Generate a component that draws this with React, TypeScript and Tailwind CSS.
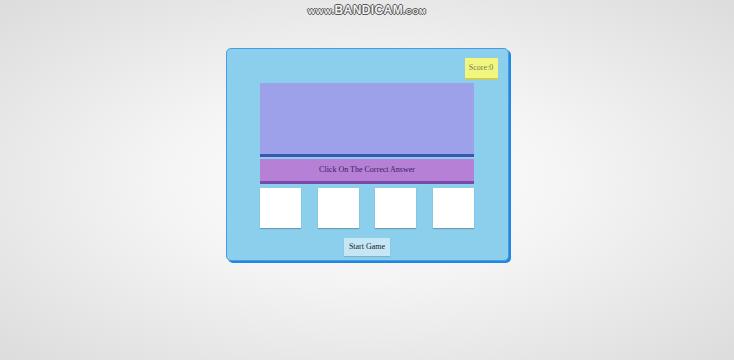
export default function App() {
  return (
    <div className="relative h-[360px] w-[734px] overflow-hidden bg-[radial-gradient(ellipse_at_center,#ffffff_0%,#f4f4f4_40%,#dcdcdc_100%)] font-['Liberation_Serif',serif]">
      {/* recorder watermark */}
      <div className="absolute left-0 right-0 top-[1px] flex items-baseline justify-center font-['Liberation_Sans',sans-serif] font-bold uppercase text-[#f2f2f2] [text-shadow:1px_0_0_#555,-1px_0_0_#555,0_1px_0_#555,0_-1px_0_#555]">
        <span className="text-[8px] tracking-[0.6px]">www.</span>
        <span className="text-[12px] tracking-[0.4px]">Bandicam</span>
        <span className="text-[8px] tracking-[0.6px]">.com</span>
      </div>

      <div className="flex justify-center pt-[48px]">
        <div className="flex h-[213px] w-[283px] flex-col rounded-[5px] border border-[#4a9be6] bg-[#8ccfec] shadow-[2px_2px_0_#1e88e5]">
          {/* score */}
          <div className="flex justify-end pr-[10px] pt-[9px]">
            <div className="flex h-[20px] w-[33px] items-center justify-center bg-[#f1f77e] text-[8px] text-[#7a7a55] shadow-[0_2px_0_#c9cc5f]">
              Score:0
            </div>
          </div>

          <div className="mx-auto mt-[5px] flex w-[214px] flex-col">
            {/* question area */}
            <div className="h-[74px] border-b-[3px] border-[#3d55b3] bg-[#9da1ea]" />

            {/* instruction */}
            <div className="mt-[2px] flex h-[25px] items-center justify-center border-b-[3px] border-[#7a4aa8] bg-[#b580d6] text-[8px] text-[#3a1e5a]">
              Click On The Correct Answer
            </div>

            {/* answers */}
            <div className="mt-[4px] flex justify-between">
              {[0, 1, 2, 3].map((i) => (
                <div
                  key={i}
                  className="h-[40px] w-[41px] bg-white shadow-[0_1px_1px_#6a9fb8]"
                />
              ))}
            </div>

            {/* start */}
            <div className="mt-[10px] flex justify-center">
              <button className="h-[18px] w-[46px] bg-[#c5e6f5] text-[8px] text-[#222] shadow-[0_1px_1px_#7fb3cc]">
                Start Game
              </button>
            </div>
          </div>
        </div>
      </div>
    </div>
  );
}
